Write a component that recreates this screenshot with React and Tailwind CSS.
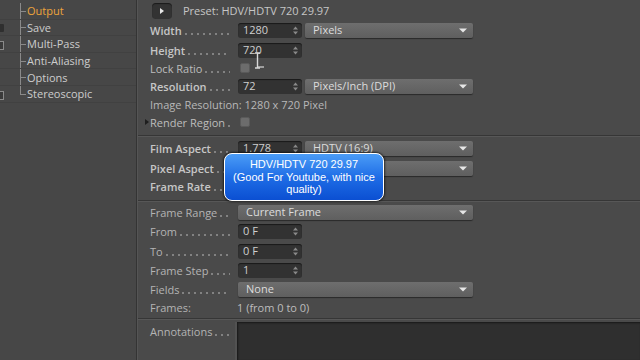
import React from "react";

const font = { fontFamily: '"Open Sans", "Noto Sans", sans-serif' };

function Spin() {
  return (
    <svg width="5" height="9" viewBox="0 0 5 9" className="ml-auto mr-[4px]">
      <path d="M0 3.5 L2.5 0.5 L5 3.5 Z" fill="#8a8a8a" />
      <path d="M0 5.5 L2.5 8.5 L5 5.5 Z" fill="#8a8a8a" />
    </svg>
  );
}

function Arrow() {
  return (
    <svg width="8" height="5" viewBox="0 0 8 5" className="ml-auto mr-[6px]">
      <path d="M0 0.5 L8 0.5 L4 4.5 Z" fill="#e6e6e6" />
    </svg>
  );
}

// label followed by a dotted leader up to the field column
function Label({ text, bold, dots = true, dim }) {
  return (
    <div className="flex h-[12px] w-[80px] shrink-0 items-end">
      <span
        className={
          "whitespace-nowrap text-[11px] leading-none " +
          (bold ? "font-semibold text-[#c6c6c6]" : dim ? "text-[#b4b4b4]" : "text-[#bdbdbd]")
        }
      >
        {text}
      </span>
      {dots && (
        <div className="mb-[1px] ml-[3px] h-[2px] flex-1 bg-[radial-gradient(circle_at_1px_1px,#828282_0.8px,transparent_1.1px)] bg-[length:6px_2px] bg-repeat-x" />
      )}
    </div>
  );
}

function Field({ value }) {
  return (
    <div className="ml-[8px] flex h-[15px] w-[64px] shrink-0 items-center rounded-[3px] bg-[#323232] pl-[5px] text-[11px] text-[#cfcfcf] shadow-[inset_0_1px_1px_rgba(0,0,0,0.5)]">
      {value && <span>{value}</span>}
      <Spin />
    </div>
  );
}

function Drop({ value, wide }) {
  return (
    <div
      className={
        "flex h-[15px] shrink-0 items-center rounded-[2px] bg-gradient-to-b from-[#6e6e6e] to-[#5f5f5f] pl-[8px] text-[11px] text-[#dcdcdc] shadow-[0_1px_1px_rgba(0,0,0,0.45)] " +
        (wide ? "ml-[8px] w-[235px]" : "ml-[3px] w-[168px]")
      }
    >
      {value && <span>{value}</span>}
      <Arrow />
    </div>
  );
}

function Row({ children, extra = "" }) {
  return <div className={"flex h-[18px] items-center pl-[12px] " + extra}>{children}</div>;
}

function Divider() {
  return <div className="h-[2px] border-t border-b border-t-[#363636] border-b-[#575757]" />;
}

function TreeItem({ text, active, last }) {
  return (
    <div className="flex h-[16.6px] items-center border-b border-[#414141] pl-[20px]">
      <div className="relative h-full w-[7px] shrink-0">
        <div className={"absolute left-0 top-0 w-px bg-[#8a8a8a] " + (last ? "h-1/2" : "h-full")} />
        <div className="absolute left-0 top-1/2 h-px w-[6px] bg-[#8a8a8a]" />
      </div>
      <span className={"text-[11px] leading-none " + (active ? "text-[#eda43b]" : "text-[#cdcdcd]")}>{text}</span>
    </div>
  );
}

export default function App() {
  return (
    <div className="relative flex h-[360px] w-[640px] overflow-hidden bg-[#4a4a4a]" style={font}>
      {/* sidebar */}
      <div className="relative w-[136px] shrink-0 bg-[#474747] pt-[3px]">
        <div className="absolute left-0 top-[24px] h-[8px] w-[4px] rounded-r-[1px] bg-[#2f2f2f]" />
        <div className="absolute left-0 top-[41px] h-[9px] w-[4px] border border-l-0 border-[#8a8a8a] bg-[#3a3a3a]" />
        <div className="absolute left-0 top-[91px] h-[9px] w-[4px] border border-l-0 border-[#8a8a8a] bg-[#3a3a3a]" />
        <TreeItem text="Output" active />
        <TreeItem text="Save" />
        <TreeItem text="Multi-Pass" />
        <TreeItem text="Anti-Aliasing" />
        <TreeItem text="Options" />
        <TreeItem text="Stereoscopic" last />
      </div>
      <div className="w-px bg-[#343434]" />
      <div className="w-px bg-[#555555]" />

      {/* main panel */}
      <div className="flex flex-1 flex-col">
        <div className="pt-[1px] pb-[4px]">
          <div className="flex h-[20px] items-center pl-[14px]">
            <div className="flex h-[16px] w-[20px] items-center justify-center rounded-[4px] bg-[#333333] shadow-[inset_0_1px_1px_rgba(0,0,0,0.5)]">
              <svg width="4" height="6" viewBox="0 0 4 6">
                <path d="M0 0 L4 3 L0 6 Z" fill="#e8e8e8" />
              </svg>
            </div>
            <span className="ml-[11px] text-[11px] text-[#c6c6c6]">Preset: HDV/HDTV 720 29.97</span>
          </div>
          <Row>
            <Label text="Width" bold />
            <Field value="1280" />
            <Drop value="Pixels" />
          </Row>
          <Row extra="mt-[2px]">
            <Label text="Height" bold />
            <Field value="720" />
          </Row>
          <Row>
            <Label text="Lock Ratio" />
            <div className="ml-[10px] h-[10px] w-[10px] rounded-[2px] border border-[#5a5a5a] bg-[#6c6c6c]" />
          </Row>
          <Row>
            <Label text="Resolution" bold />
            <Field value="72" />
            <Drop value="Pixels/Inch (DPI)" />
          </Row>
          <Row>
            <span className="text-[11px] leading-none text-[#b8b8b8]">Image Resolution: 1280 x 720 Pixel</span>
          </Row>
          <div className="flex h-[18px] items-center pl-[7px]">
            <svg width="4" height="6" viewBox="0 0 4 6" className="mr-[1px] shrink-0">
              <path d="M0 0 L4 3 L0 6 Z" fill="#1e1e1e" />
            </svg>
            <Label text="Render Region" />
            <div className="ml-[10px] h-[10px] w-[10px] rounded-[2px] border border-[#5a5a5a] bg-[#6c6c6c]" />
          </div>
        </div>
        <Divider />

        <div className="pt-[2px] pb-[5px]">
          <Row>
            <Label text="Film Aspect" bold />
            <Field value="1.778" />
            <Drop value="HDTV (16:9)" />
          </Row>
          <Row extra="mt-[2px]">
            <Label text="Pixel Aspect" bold />
            <Field />
            <Drop />
          </Row>
          <Row>
            <Label text="Frame Rate" bold />
            <Field />
          </Row>
        </div>
        <Divider />

        <div className="pt-[1px] pb-[2px]">
          <Row>
            <Label text="Frame Range" dim />
            <Drop value="Current Frame" wide />
          </Row>
          <Row extra="mt-[1px]">
            <Label text="From" dim />
            <Field value="0 F" />
          </Row>
          <Row extra="mt-[2px]">
            <Label text="To" dim />
            <Field value="0 F" />
          </Row>
          <Row extra="mt-[1px]">
            <Label text="Frame Step" dim />
            <Field value="1" />
          </Row>
          <Row extra="mt-[1px]">
            <Label text="Fields" dim />
            <Drop value="None" wide />
          </Row>
          <Row>
            <Label text="Frames:" dots={false} dim />
            <span className="ml-[7px] text-[11px] leading-none text-[#bdbdbd]">1 (from 0 to 0)</span>
          </Row>
        </div>
        <Divider />

        <div className="flex flex-1">
          <div className="w-[97px] shrink-0 pl-[12px] pt-[5px]">
            <Label text="Annotations" dim />
          </div>
          <div className="mt-[2px] w-[2px] bg-[#525252]" />
          <div className="mt-[2px] flex-1 bg-[#2f2f2f] shadow-[inset_1px_1px_2px_rgba(0,0,0,0.5)]" />
        </div>
      </div>

      {/* mouse cursor */}
      <svg className="absolute left-[253px] top-[52px]" width="12" height="18" viewBox="0 0 12 18">
        <path d="M2 1 H7 M4.5 1 V16 M2 16 H7" stroke="#d8d8d8" strokeWidth="1.4" fill="none" />
        <path d="M5 15 H11" stroke="#d8d8d8" strokeWidth="1.2" />
      </svg>

      {/* tooltip */}
      <div
        className="absolute left-[224px] top-[153px] flex h-[48px] w-[160px] flex-col items-center justify-center rounded-[8px] border border-white bg-gradient-to-b from-[#4b9cf6] via-[#1f6de6] to-[#0b4fd2] text-center text-[11px] leading-[12.5px] text-white shadow-[0_0_2px_1px_rgba(0,0,0,0.6)]"
        style={{ fontFamily: '"Liberation Sans", Arial, sans-serif' }}
      >
        <div>HDV/HDTV 720 29.97</div>
        <div>(Good For Youtube, with nice</div>
        <div>quality)</div>
      </div>
    </div>
  );
}
